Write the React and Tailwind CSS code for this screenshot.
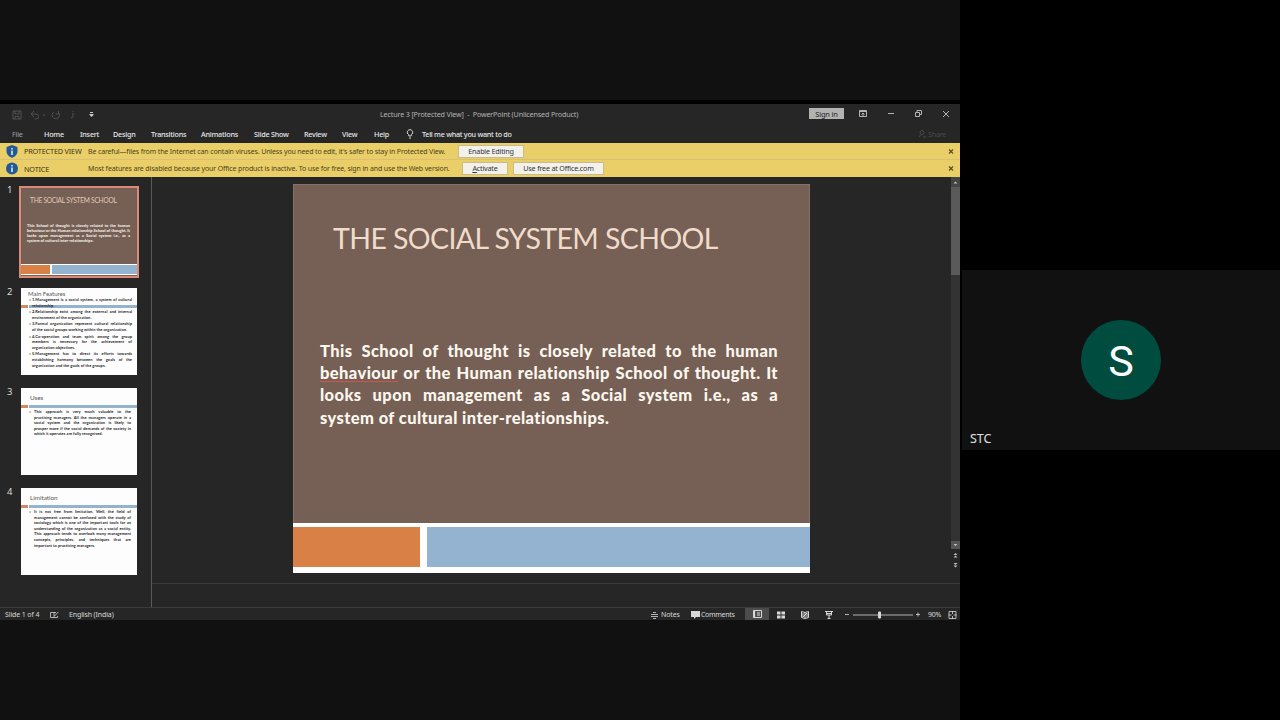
import React from 'react';
import { clsx } from 'clsx';

const MENU = [
  { label: 'File', width: 'w-[32px]', dim: true },
  { label: 'Home', width: 'w-[36px]' },
  { label: 'Insert', width: 'w-[33px]' },
  { label: 'Design', width: 'w-[38px]' },
  { label: 'Transitions', width: 'w-[50px]' },
  { label: 'Animations', width: 'w-[53px]' },
  { label: 'Slide Show', width: 'w-[50px]' },
  { label: 'Review', width: 'w-[38px]' },
  { label: 'View', width: 'w-[32px]' },
  { label: 'Help', width: 'w-[31px]' },
];

const SLIDES = [
  {
    id: 2,
    title: 'Main Features',
    points: [
      ['1.Management is a social system, a system of cultural', 'relationship.'],
      ['2.Relationship exist among the external and internal', 'environment of the organization.'],
      ['3.Formal organization represent cultural relationship', 'of the social groups working within the organization.'],
      ['4.Co-operation and team spirit among the group', 'members is necessary for the achievement of', 'organization objectives.'],
      ['5.Management has to direct its efforts towards', 'establishing harmony between the goals of the', 'organization and the goals of the groups.'],
    ],
  },
  {
    id: 3,
    title: 'Uses',
    points: [
      ['This approach is very much valuable to the', 'practising managers. All the managers operate in a', 'social system and the organization is likely to', 'prosper more if the social demands of the society in', 'which it operates are fully recognised.'],
    ],
  },
  {
    id: 4,
    title: 'Limitation',
    points: [
      ['It is not free from limitation. Well, the field of', 'management cannot be confused with the study of', 'sociology which is one of the important tools for an', 'understanding of the organization as a social entity.', 'This approach tends to overlook many management', 'concepts, principles, and techniques that are', 'important to practising managers.'],
    ],
  },
];

const SLIDE_TEXT = [
  'This School of thought is closely related to the human',
  'behaviour or the Human relationship School of thought. It',
  'looks upon management as a Social system i.e., as a',
  'system of cultural inter-relationships.',
];

// Lines of a paragraph, all justified except the last one
const Lines = ({ lines, className, renderLine }) => (
  <div className={clsx('[font-variant-ligatures:none]', className)}>
    {lines.map((line, i) => (
      <div
        key={line}
        className={clsx('whitespace-nowrap', i < lines.length - 1 && '[text-align-last:justify]')}
      >
        {renderLine ? renderLine(line) : line}
      </div>
    ))}
  </div>
);

const TitleBar = () => (
  <div className="flex h-[21px] items-center text-[#b4b4b4]">
    <div className="flex w-[380px] items-center pl-3 text-[#505050]">
      <svg className="h-[10px] w-[10px]" viewBox="0 0 10 10" fill="none" stroke="currentColor">
        <path d="M1 1h8v8H1zM3 1v3h4V1M3 9V6.500h4V9" />
      </svg>
      <svg className="ml-2 h-[10px] w-[16px]" viewBox="0 0 16 10" fill="none" stroke="currentColor">
        <path d="M4 1L1 4l3 3M1 4h5a2.300 2.300 0 0 1 0 5H5" />
        <path d="M12.500 4.500h3l-1.500 1.500z" fill="currentColor" stroke="none" />
      </svg>
      <svg className="ml-[5px] h-[10px] w-[10px]" viewBox="0 0 10 10" fill="none" stroke="currentColor">
        <path d="M3 1.800a3.700 3.700 0 1 0 4.500.7M4.500 4h3V1" />
      </svg>
      <svg className="ml-[9px] h-[9px] w-[5px]" viewBox="0 0 5 9" fill="none" stroke="currentColor">
        <path d="M3 1v1M3 3v4L1 8" />
      </svg>
      <svg className="ml-[14px] h-[7px] w-[5px] text-[#c8c8c8]" viewBox="0 0 5 7" fill="currentColor">
        <path d="M1 1h3v1H1zM.5 3h4v1L2.500 6 .5 4z" />
      </svg>
    </div>
    <div className="w-[429px] whitespace-pre text-[7.200px] tracking-[-0.165px]">
      {'Lecture 3 [Protected View]  -  PowerPoint (Unlicensed Product)'}
    </div>
    <button className="mb-[2px] h-[11px] w-[35px] bg-[#b2b2b2] text-[7.500px] leading-[12px] tracking-[-0.200px] text-[#222]">Sign in</button>
    <svg className="mb-[2px] ml-[15px] h-[7px] w-[8px]" viewBox="0 0 8 7" fill="none" stroke="currentColor">
      <path d="M.5.5h7v6h-7zM0 1.500h8M4 6V3M2.500 4.500L4 3l1.500 1.500" />
    </svg>
    <svg className="mb-[2px] ml-[21px] h-[7px] w-[6px]" viewBox="0 0 6 7" stroke="currentColor">
      <path d="M0 3.500h6" />
    </svg>
    <svg className="mb-[2px] ml-[21px] h-[7px] w-[7px]" viewBox="0 0 7 7" fill="none" stroke="currentColor">
      <path d="M.5 2.500h4v4h-4zM2 2V.5h4.500v4H5" />
    </svg>
    <svg className="mb-[2px] ml-[21px] h-[6px] w-[6px]" viewBox="0 0 6 6" stroke="currentColor">
      <path d="M0 0l6 6M6 0L0 6" />
    </svg>
  </div>
);

const MenuBar = () => (
  <div className="flex h-[18px] items-center pl-3 text-[7.200px] tracking-[-0.220px] text-[#e6e6e6]">
    {MENU.map(({ label, width, dim }) => (
      <button
        key={label}
        className={clsx('shrink-0 whitespace-nowrap text-left', width, dim ? 'text-[#a0a0a0]' : 'font-medium')}
      >
        {label}
      </button>
    ))}
    <svg className="ml-px h-[10px] w-[8px]" viewBox="0 0 8 10" fill="none" stroke="currentColor" strokeWidth=".9">
      <path d="M2.800 7V5.800a2.700 2.700 0 1 1 2.400 0V7zM3 9h2" />
    </svg>
    <span className="ml-2 w-[496px] font-medium tracking-[-0.260px]">Tell me what you want to do</span>
    <svg className="h-[8px] w-[8px] text-[#484848]" viewBox="0 0 8 8" fill="none" stroke="currentColor">
      <circle cx="4" cy="2.500" r="2" />
      <path d="M1 7l2-2.500M5 7h3" />
    </svg>
    <span className="ml-[2px] text-[#484848]">Share</span>
  </div>
);

const Notice = ({ icon, title, text, textWidth, className, children }) => (
  <div className={clsx('flex h-[17px] items-center bg-[#eacf68] pl-[6px] text-[7px] text-[#4b421f]', className)}>
    {icon}
    <span className="mt-px ml-[6px] w-[64px] shrink-0 whitespace-nowrap text-[7.300px] tracking-[-0.190px] text-[#3c3418]">{title}</span>
    <span className={clsx('mt-[2px] shrink-0 whitespace-nowrap tracking-[-0.135px]', textWidth)}>{text}</span>
    {children}
    <svg className="ml-auto mr-[6px] h-[5px] w-[6px]" viewBox="0 0 5 5" stroke="#5d4c2b" strokeWidth="1.200">
      <path d="M.5.5l4 4M4.500.5l-4 4" />
    </svg>
  </div>
);

const NoticeButton = ({ className, children }) => (
  <button className={clsx('h-[13px] shrink-0 whitespace-nowrap border border-[#c9bb85] bg-[#f3f1ec] text-[7.200px] leading-[11px] tracking-[-0.200px] text-[#333]', className)}>
    {children}
  </button>
);

const SlideFooter = ({ small }) => (
  <div className={clsx('flex bg-white', small ? 'h-[11px] gap-[2px] py-px' : 'h-[50px] gap-[7px] pt-[4px] pb-[6px]')}>
    <div className={clsx('bg-[#d98046]', small ? 'w-[29px]' : 'w-[127px]')} />
    <div className="flex-1 bg-[#94b3d0]" />
  </div>
);

const ThumbRow = ({ id, className, children }) => (
  <div className={clsx('flex', className)}>
    <span className="w-[21px] shrink-0 pl-[7px] font-['Noto_Sans',sans-serif] text-[9.500px] leading-[8px] text-[#dcdcdc]">{id}</span>
    {children}
  </div>
);

const Thumbnails = () => (
  <div className="w-[152px] shrink-0 border-r border-[#5a5a5a] pt-[9px] font-['Lato',sans-serif]">
    <ThumbRow id={1}>
      <div className="-ml-[2px] h-[92px] w-[120px] border-2 border-[#dc8a78] bg-[#765f54]">
        <div className="h-[76px] pt-[8px] pl-[9px]">
          <div className="text-[6.600px] leading-[9px] tracking-[-0.240px] whitespace-nowrap text-[#e0cbbb]">THE SOCIAL SYSTEM SCHOOL</div>
          <Lines lines={SLIDE_TEXT} className="-ml-[3px] mt-[18px] w-[103px] text-[4px] leading-[5px] font-black text-[#f4efe8]" />
        </div>
        <SlideFooter small />
      </div>
    </ThumbRow>
    {SLIDES.map((slide) => (
      <ThumbRow key={slide.id} id={slide.id} className={slide.id === 2 ? 'mt-[10px]' : 'mt-[13px]'}>
        <div className="relative h-[87px] w-[116px] bg-[#fdfdfd]">
          <div className="absolute inset-x-0 top-[17px] flex h-[3px] gap-px">
            <div className="w-[7px] bg-[#d08a62]" />
            <div className="flex-1 bg-[#94b3cc]" />
          </div>
          <div className={clsx('relative whitespace-nowrap text-[#555] [font-variant-ligatures:none]', slide.id === 2 ? 'pt-[2px] pl-[7px] text-[6px] leading-[7px]' : 'pt-[5px] pl-[9px] text-[6.300px] leading-[9px]')}>
            {slide.title}
          </div>
          <div className={clsx('relative flex flex-col', slide.id === 2 ? 'gap-[1px]' : 'mt-[7px]')}>
            {slide.points.map((lines) => (
              <div key={lines[0]} className="flex pl-[8px]">
                <i className="mt-[2px] mr-[1px] h-[2px] w-[2px] bg-[#d8c4b4]" />
                <Lines
                  lines={lines}
                  className={clsx('text-[4px] font-bold tracking-[0.040px] text-[#222]', slide.id === 2 ? 'w-[100px] leading-[5.600px]' : 'ml-[2px] w-[97px] leading-[5.600px]')}
                />
              </div>
            ))}
          </div>
        </div>
      </ThumbRow>
    ))}
  </div>
);

const Slide = () => (
  <div className="h-[389px] w-[517px] bg-[#765f54] font-['Lato',sans-serif]">
    <div className="h-[339px] border-x border-t border-[#84726a] pt-[33px] pl-[39px]">
      <h1 className="text-[28.500px] leading-[40px] tracking-[-0.600px] whitespace-nowrap text-[#efdccb]">THE SOCIAL SYSTEM SCHOOL</h1>
      <Lines
        lines={SLIDE_TEXT}
        className="-ml-[13px] mt-[81.500px] w-[458px] text-[16.500px] leading-[22.400px] font-black tracking-[0.400px] text-[#fbf7ef]"
        renderLine={(line) =>
          line.startsWith('behaviour') ? (
            <>
              <span className="inline-block border-b border-[#d0564c] leading-[16px]">behaviour</span>
              {line.slice('behaviour'.length)}
            </>
          ) : (
            line
          )
        }
      />
    </div>
    <SlideFooter />
  </div>
);

const ScrollBar = () => (
  <div className="flex w-[9px] flex-col items-center bg-[#333] text-[#c0c0c0]">
    <svg className="h-[10px] w-[9px] bg-[#444]" viewBox="0 0 9 10" fill="currentColor">
      <path d="M2.500 6.500h4l-2-2z" />
    </svg>
    <div className="h-[88px] w-[9px] bg-[#5a5a5a]" />
    <svg className="mt-auto h-[8px] w-[9px] bg-[#555]" viewBox="0 0 9 8" fill="currentColor">
      <path d="M2.500 3h4l-2 2z" />
    </svg>
    <svg className="h-[34px] w-[9px] bg-[#262626]" viewBox="0 0 9 34" fill="currentColor">
      <path d="M2.500 6l2-2 2 2zM2.500 8.500l2-2 2 2zM2.500 14h4l-2 2zM2.500 16.500h4l-2 2z" />
    </svg>
  </div>
);

const StatusBar = () => (
  <div className="flex h-[13px] items-center border-t border-[#3c3c3c] pt-[2px] text-[7px] tracking-[-0.130px] text-[#d8d8d8]">
    <span className="w-[50px] pl-[5px] whitespace-nowrap">Slide 1 of 4</span>
    <svg className="h-[8px] w-[9px]" viewBox="0 0 9 8" fill="none" stroke="currentColor" strokeWidth=".8">
      <path d="M4 1.500H.5v5H4V1.500h2M4 6.500h3.500V5M4.500 5L8.500.8" />
    </svg>
    <span className="ml-[10px] w-[582px]">English (India)</span>
    <svg className="h-[8px] w-[7px]" viewBox="0 0 7 8" stroke="currentColor">
      <path d="M2 1.500h3M0 3.500h7M0 5.500h7M2 7.500h3" strokeWidth=".8" />
    </svg>
    <span className="ml-[3px] w-[30px]">Notes</span>
    <svg className="h-[8px] w-[9px]" viewBox="0 0 9 8" fill="currentColor">
      <path d="M0 0h9v6H5L3 8V6H0z" />
    </svg>
    <span className="ml-[1px] w-[44px] tracking-[-0.300px]">Comments</span>
    <div className="-mt-[2px] flex h-[12px] w-[24px] items-center justify-center bg-[#4c4c4c]">
      <svg className="h-[8px] w-[9px]" viewBox="0 0 9 8" fill="none" stroke="currentColor">
        <path d="M.5.5h8v7h-8z" />
        <path d="M1.500 0v8M4 3h3M4 5h3" strokeWidth="1.200" />
      </svg>
    </div>
    <svg className="ml-[8px] h-[8px] w-[8px]" viewBox="0 0 9 8" fill="currentColor">
      <path d="M0 0h4v3.500H0zM5 0h4v3.500H5zM0 4.500h4V8H0zM5 4.500h4V8H5z" />
    </svg>
    <svg className="ml-[16px] h-[8px] w-[8px]" viewBox="0 0 8 8" fill="none" stroke="currentColor">
      <path d="M.5.5L4 1.500 7.500.5v6L4 7.500 .5 6.500zM4 1.500V7M2 2v4L6 2v4" />
    </svg>
    <svg className="ml-[16px] h-[8px] w-[8px]" viewBox="0 0 8 8" fill="none" stroke="currentColor">
      <path d="M0 .5h8M1.500 2.500h5M1.500 1v3h5V1M4 4v3M2.500 7.500h3" />
    </svg>
    <svg className="ml-[12px] h-[8px] w-[75px]" viewBox="0 0 75 8" stroke="currentColor" fill="currentColor">
      <path d="M0 3.500h4M8 4h60M71 3.500h4M73 1.500v4" strokeWidth=".8" />
      <path d="M33.500 1h2v6h-2z" strokeWidth="1" />
    </svg>
    <span className="ml-[8px] w-[20px] tracking-[-0.300px]">90%</span>
    <svg className="h-[8px] w-[9px]" viewBox="0 0 8 8" fill="none" stroke="currentColor" strokeWidth=".8">
      <path d="M.5.5h7v7h-7zM4 0v3M4 5v3M0 4h3M5 4h3" />
    </svg>
  </div>
);

const PowerPoint = () => (
  <div className="flex h-[516px] flex-col bg-[#262626]">
    <TitleBar />
    <MenuBar />
    <Notice
      className="border-b border-[#d8c07a]"
      title="PROTECTED VIEW"
      text="Be careful—files from the Internet can contain viruses. Unless you need to edit, it's safer to stay in Protected View."
      textWidth="w-[370px]"
      icon={
        <svg className="h-[13px] w-[12px] shrink-0" viewBox="0 0 12 13">
          <path d="M6 0l5.500 2v4.500C11.500 10 8 12 6 13 4 12 .5 10 .5 6.500V2z" fill="#245a94" />
          <path d="M6 3v1.500M6 5.500V10" stroke="#e7eff5" strokeWidth="1.500" />
        </svg>
      }
    >
      <NoticeButton className="w-[66px]">Enable Editing</NoticeButton>
    </Notice>
    <Notice
      title="NOTICE"
      text="Most features are disabled because your Office product is inactive. To use for free, sign in and use the Web version."
      textWidth="w-[374px]"
      icon={
        <svg className="h-[13px] w-[12px] shrink-0" viewBox="0 0 12 13">
          <circle cx="6" cy="6.500" r="6" fill="#245a94" />
          <path d="M6 3v1.500M6 5.500V10" stroke="#e7eff5" strokeWidth="1.500" />
        </svg>
      }
    >
      <NoticeButton className="w-[46px]"><u>A</u>ctivate</NoticeButton>
      <NoticeButton className="ml-[5px] w-[91px]">Use free at Office.com</NoticeButton>
    </Notice>
    <div className="flex min-h-0 flex-1">
      <Thumbnails />
      <div className="flex flex-1 flex-col">
        <div className="flex h-[407px] border-b border-[#3a3a3a]">
          <div className="flex-1 pt-[7px] pl-[141px]">
            <Slide />
          </div>
          <ScrollBar />
        </div>
      </div>
    </div>
    <StatusBar />
  </div>
);

export default function App() {
  return (
    <div className="flex h-[720px] w-[1280px] overflow-hidden bg-black font-['Noto_Sans',sans-serif]">
      <main className="flex w-[960px] flex-col">
        <div className="h-[100px] bg-[#111]" />
        <div className="h-1" />
        <PowerPoint />
        <div className="flex-1 bg-[#111]" />
      </main>
      <aside className="flex flex-1 items-center pl-[2px]">
        <div className="flex h-[180px] w-full flex-col bg-[#111]">
          <div className="mt-[50px] flex h-20 w-20 items-center justify-center self-center rounded-full bg-[#004d40] pt-[2px] font-['Roboto',sans-serif] text-[43px] text-white">
            S
          </div>
          <span className="mt-[29px] ml-[8px] text-[12.500px] leading-5 text-[#e0e0e0]">STC</span>
        </div>
      </aside>
    </div>
  );
}
